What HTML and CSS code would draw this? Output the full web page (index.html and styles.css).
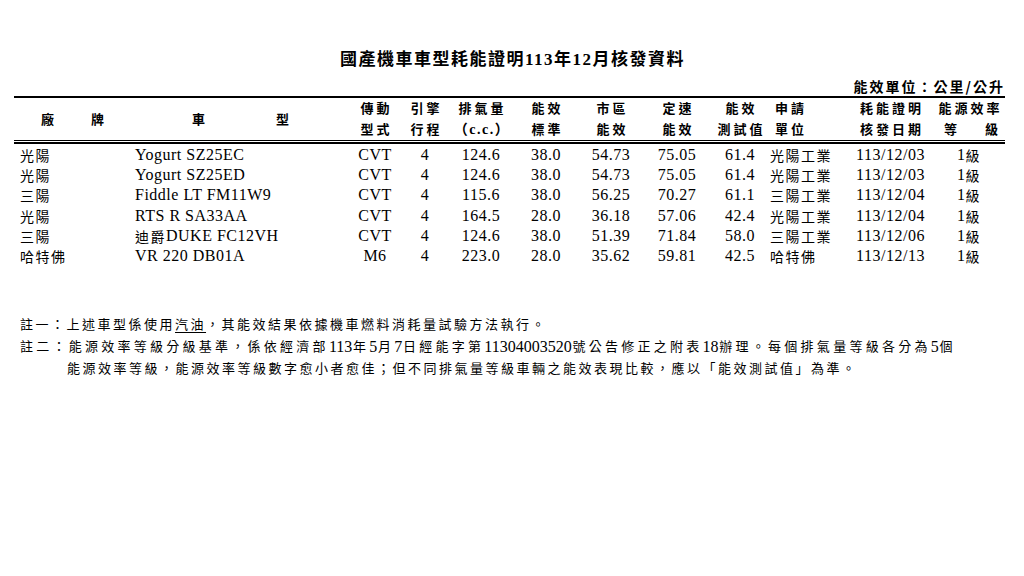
FILE: index.html
```html
<!DOCTYPE html>
<html lang="zh-Hant">
<head>
<meta charset="utf-8">
<title>國產機車車型耗能證明113年12月核發資料</title>
<link rel="stylesheet" href="styles.css">
</head>
<body>
<div class="page">
  <h1 class="title">國產機車車型耗能證明113年12月核發資料</h1>
  <div class="unit">能效單位：公里/公升</div>

  <div class="table">
    <div class="thead">
      <div class="h h-brand"><span>廠</span><span>牌</span></div>
      <div class="h h-model"><span>車</span><span>型</span></div>
      <div class="h"><div>傳動</div><div>型式</div></div>
      <div class="h"><div>引擎</div><div>行程</div></div>
      <div class="h"><div>排氣量</div><div class="tight">（c.c.）</div></div>
      <div class="h"><div>能效</div><div>標準</div></div>
      <div class="h"><div>市區</div><div>能效</div></div>
      <div class="h"><div>定速</div><div>能效</div></div>
      <div class="h"><div>能效</div><div>測試值</div></div>
      <div class="h h-left"><div>申請</div><div>單位</div></div>
      <div class="h"><div>耗能證明</div><div>核發日期</div></div>
      <div class="h h-grade"><div>能源效率</div><div class="just"><span>等</span><span>級</span></div></div>
    </div>
    <div class="rule2"></div>

    <div class="tbody">
      <div class="row">
        <div class="c-l1"><span class="cj">光陽</span></div><div class="c-l2">Yogurt SZ25EC</div><div>CVT</div><div>4</div><div>124.6</div><div>38.0</div><div>54.73</div><div>75.05</div><div>61.4</div><div class="c-l3"><span class="cj">光陽工業</span></div><div>113/12/03</div><div>1<span class="cj">級</span></div>
      </div>
      <div class="row">
        <div class="c-l1"><span class="cj">光陽</span></div><div class="c-l2">Yogurt SZ25ED</div><div>CVT</div><div>4</div><div>124.6</div><div>38.0</div><div>54.73</div><div>75.05</div><div>61.4</div><div class="c-l3"><span class="cj">光陽工業</span></div><div>113/12/03</div><div>1<span class="cj">級</span></div>
      </div>
      <div class="row">
        <div class="c-l1"><span class="cj">三陽</span></div><div class="c-l2">Fiddle LT FM11W9</div><div>CVT</div><div>4</div><div>115.6</div><div>38.0</div><div>56.25</div><div>70.27</div><div>61.1</div><div class="c-l3"><span class="cj">三陽工業</span></div><div>113/12/04</div><div>1<span class="cj">級</span></div>
      </div>
      <div class="row">
        <div class="c-l1"><span class="cj">光陽</span></div><div class="c-l2">RTS R SA33AA</div><div>CVT</div><div>4</div><div>164.5</div><div>28.0</div><div>36.18</div><div>57.06</div><div>42.4</div><div class="c-l3"><span class="cj">光陽工業</span></div><div>113/12/04</div><div>1<span class="cj">級</span></div>
      </div>
      <div class="row">
        <div class="c-l1"><span class="cj">三陽</span></div><div class="c-l2"><span class="cj">迪爵</span>DUKE FC12VH</div><div>CVT</div><div>4</div><div>124.6</div><div>38.0</div><div>51.39</div><div>71.84</div><div>58.0</div><div class="c-l3"><span class="cj">三陽工業</span></div><div>113/12/06</div><div>1<span class="cj">級</span></div>
      </div>
      <div class="row">
        <div class="c-l1"><span class="cj">哈特佛</span></div><div class="c-l2">VR 220 DB01A</div><div>M6</div><div>4</div><div>223.0</div><div>28.0</div><div>35.62</div><div>59.81</div><div>42.5</div><div class="c-l3"><span class="cj">哈特佛</span></div><div>113/12/13</div><div>1<span class="cj">級</span></div>
      </div>
    </div>
  </div>

  <div class="notes">
    <p>註一：上述車型係使用<u>汽油</u>，其能效結果依據機車燃料消耗量試驗方法執行。</p>
    <p class="wide">註二：能源效率等級分級基準，係依經濟部<span class="n">113</span>年<span class="n">5</span>月<span class="n">7</span>日經能字第<span class="n">11304003520</span>號公告修正之附表<span class="n">18</span>辦理。每個排氣量等級各分為<span class="n">5</span>個</p>
    <p class="indent">能源效率等級，能源效率等級數字愈小者愈佳；但不同排氣量等級車輛之能效表現比較，應以「能效測試值」為準。</p>
  </div>
</div>
</body>
</html>
```

FILE: styles.css
```css
html, body {
  margin: 0;
  padding: 0;
  background: #fff;
  color: #000;
}

body {
  font-family: "Liberation Serif", "Noto Sans CJK TC", serif;
}

.page {
  width: 1024px;
  height: 576px;
  box-sizing: border-box;
  padding: 48px 19px 0 14px;
}

.title {
  margin: 0;
  padding-left: 6px;
  height: 24px;
  line-height: 24px;
  font-size: 17px;
  font-weight: bold;
  letter-spacing: 1.5px;
  text-align: center;
}

.unit {
  margin-top: 5px;
  height: 18px;
  line-height: 18px;
  font-family: "Noto Sans CJK TC", sans-serif;
  font-size: 14px;
  font-weight: bold;
  letter-spacing: 2px;
  text-align: right;
}

.table {
  margin-top: 1px;
}

.thead,
.row {
  display: grid;
  grid-template-columns: 116px 220px 50px 50px 62px 68px 62px 70px 56px 80px 85px 72px;
}

.thead {
  border-top: 2px solid #000;
  border-bottom: 1px solid #000;
  height: 42px;
}

.h {
  font-family: "Liberation Serif", "Noto Sans CJK TC", sans-serif;
  font-size: 13px;
  font-weight: bold;
  letter-spacing: 3px;
  line-height: 21px;
  text-align: center;
  padding-left: 3px;
  white-space: nowrap;
}

.h .tight {
  font-size: 14px;
  letter-spacing: 1.5px;
  margin-left: -1px;
}

.h-brand,
.h-model {
  display: flex;
  align-items: center;
  padding-left: 0;
  letter-spacing: 0;
}

.h-brand {
  padding-left: 27px;
  gap: 37px;
}

.h-model {
  padding-left: 62px;
  gap: 71px;
}

.h-left {
  text-align: left;
  padding-left: 7px;
}

.h-grade {
  padding-left: 5px;
  padding-right: 2px;
}

.just {
  display: flex;
  justify-content: space-between;
  letter-spacing: 0;
  padding: 0 5px 0 6px;
}

.rule2 {
  margin-top: 1px;
  height: 2px;
  background: #000;
}

.tbody {
  padding-top: 1px;
}

.row {
  height: 20.2px;
  line-height: 20.2px;
  font-size: 16px;
  letter-spacing: 0.5px;
  text-align: center;
  white-space: nowrap;
}

.c-l1 {
  text-align: left;
  padding-left: 6px;
}

.c-l2 {
  text-align: left;
  padding-left: 5px;
}

.c-l3 {
  text-align: left;
  padding-left: 2px;
}

.cj {
  font-family: "Noto Sans CJK TC", sans-serif;
  font-size: 14px;
  letter-spacing: 1.5px;
  vertical-align: top;
}

.notes {
  margin-top: 48px;
  padding-left: 6px;
  font-family: "Liberation Serif", "Noto Sans CJK TC", serif;
  font-size: 13px;
  letter-spacing: 2.5px;
  white-space: nowrap;
}

.notes p {
  margin: 0;
  height: 22px;
  line-height: 22px;
}

.notes .n {
  font-size: 16px;
  letter-spacing: 0;
  line-height: 22px;
  vertical-align: top;
}

.notes .wide {
  width: 935px;
  white-space: normal;
  text-align: justify;
  text-align-last: justify;
}

.notes u {
  text-underline-offset: 3px;
}

.indent {
  padding-left: 47px;
}
```
